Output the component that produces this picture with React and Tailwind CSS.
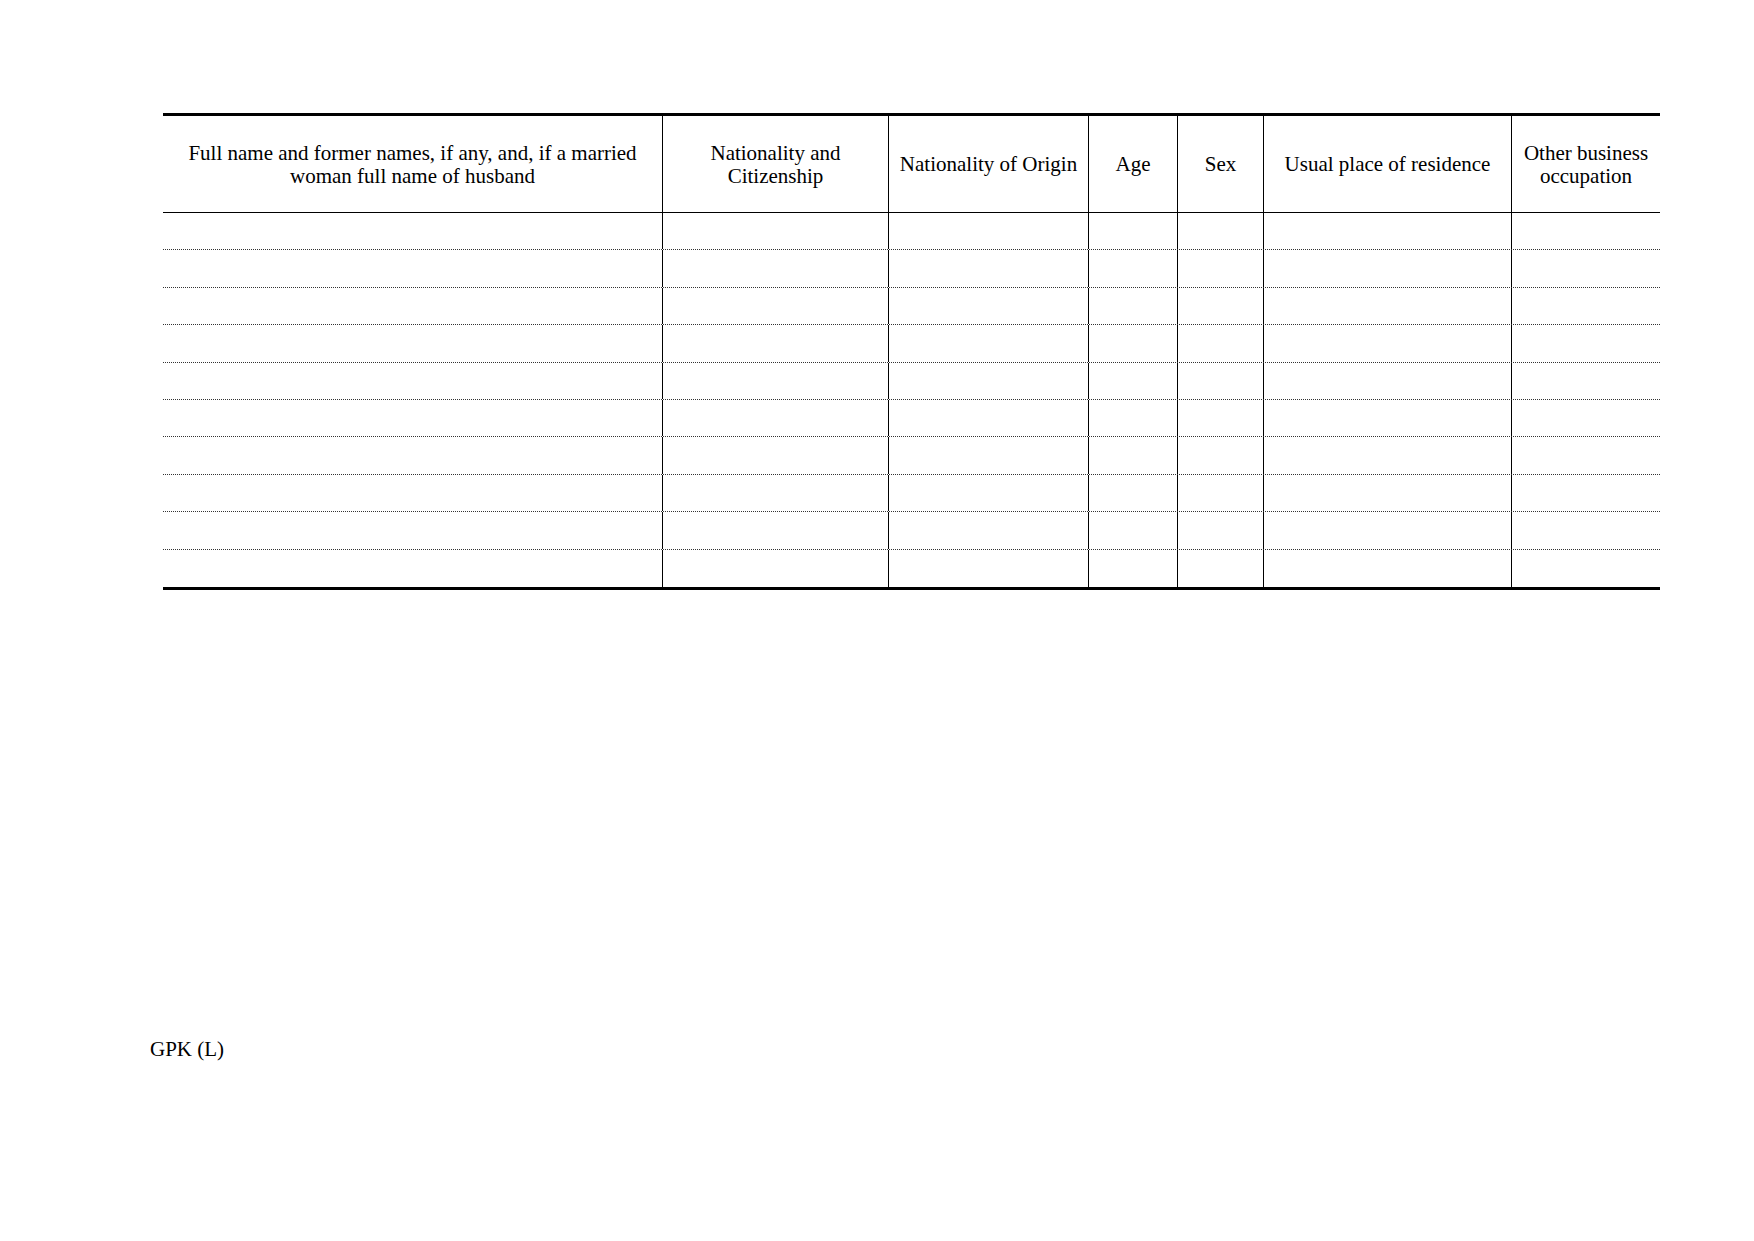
import React from 'react'

const columns = [
  { label: 'Full name and former names, if any, and, if a married woman full name of husband', width: 'w-[499px]' },
  { label: 'Nationality and Citizenship', width: 'w-[226px]' },
  { label: 'Nationality of Origin', width: 'w-[200px]' },
  { label: 'Age', width: 'w-[89px]' },
  { label: 'Sex', width: 'w-[86px]' },
  { label: 'Usual place of residence', width: 'w-[248px]' },
  { label: 'Other business occupation', width: 'w-[149px]' }
]

const rows = Array.from({ length: 10 }, (_, i) => i)

const App = () => {
  return (
    <div className="min-h-[1241px] w-[1754px] bg-white pt-[113px] font-['Liberation_Serif',serif] text-[21px] leading-[23.5px] text-black">
      {/* Register table */}
      <div className="ml-[163px] w-[1497px] border-t-[3px] border-b-[3px] border-black">
        {/* Header */}
        <div className="flex h-[97px] border-b border-black">
          {columns.map((col, idx) => (
            <div
              key={idx}
              className={`${col.width} flex items-center justify-center px-2 pt-[2px] text-center ${idx > 0 ? 'border-l border-black' : ''}`}
            >
              {col.label}
            </div>
          ))}
        </div>

        {/* Blank entry rows */}
        {rows.map((r) => (
          <div
            key={r}
            className={`flex h-[37.4px] ${r < rows.length - 1 ? 'border-b border-dotted border-[#333]' : ''}`}
          >
            {columns.map((col, idx) => (
              <div
                key={idx}
                className={`${col.width} ${idx > 0 ? 'border-l border-black' : ''}`}
              />
            ))}
          </div>
        ))}
      </div>

      {/* Footer reference */}
      <p className="ml-[150px] mt-[448px]">GPK (L)</p>
    </div>
  )
}

export default App
